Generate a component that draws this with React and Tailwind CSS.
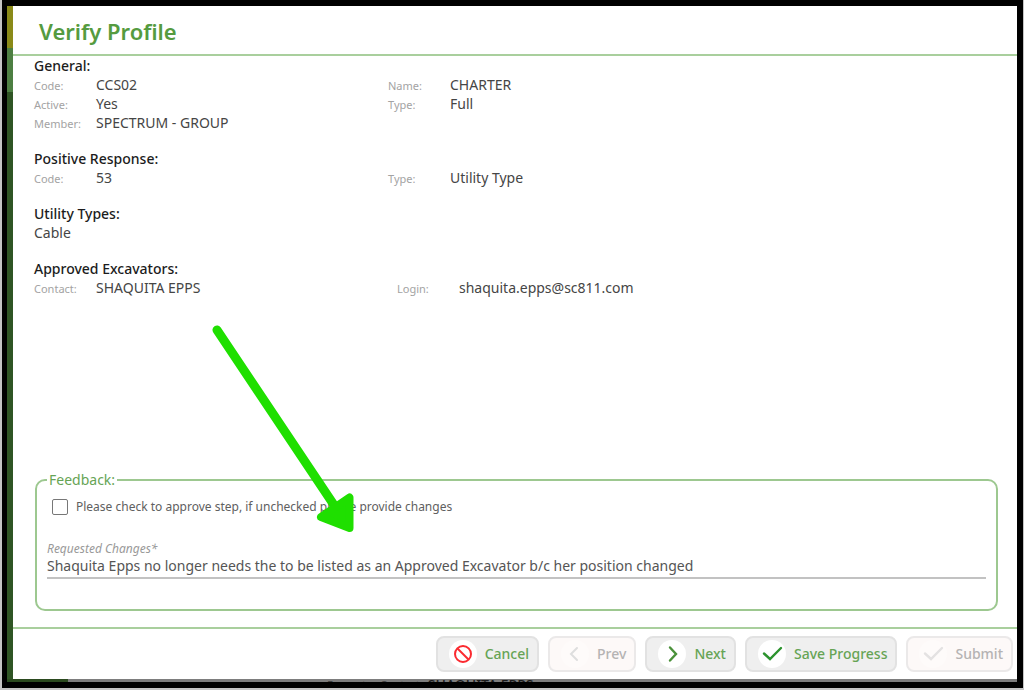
import React, { useState } from 'react';

const Field = ({ label, children }) => (
    <div className="flex h-[19px] items-baseline">
        <dt className="w-[62px] text-[11px] text-[#a3a3a3]">{label}</dt>
        <dd className="text-[#454545]">{children}</dd>
    </div>
);

const Section = ({ title, children }) => (
    <section>
        <h2 className="font-medium text-[#1c1c1c]">{title}</h2>
        {children}
    </section>
);

const CancelIcon = () => (
    <svg viewBox="0 0 28 28" className="size-7" fill="none" stroke="#fb2a30" strokeWidth="2">
        <circle cx="14" cy="14" r="8" />
        <path d="M8.5 8.5l11 11" />
    </svg>
);

const PrevIcon = () => (
    <svg viewBox="0 0 28 28" className="size-7" fill="none" stroke="#dedede" strokeWidth="2" strokeLinecap="round">
        <path d="M16 8l-6 6 6 6" />
    </svg>
);

const NextIcon = () => (
    <svg viewBox="0 0 28 28" className="size-7" fill="none" stroke="#4a9139" strokeWidth="2.4" strokeLinecap="round">
        <path d="M12 7.5l6 6.5-6 6.5" />
    </svg>
);

const CheckIcon = ({ color }) => (
    <svg viewBox="0 0 28 28" className="size-7" fill="none" stroke={color} strokeWidth="2.4" strokeLinecap="round">
        <path d="M6 13.5l6 5.5L23 8" />
    </svg>
);

const ActionButton = ({ icon, disabled, children }) => (
    <button
        type="button"
        disabled={disabled}
        className={`flex h-9 items-center gap-2 rounded-lg border-2 pl-[11px] pr-2 text-sm font-medium ${
            disabled ? 'border-[#ebe9e9] bg-[#fdf9f8] text-[#b5b3b3]' : 'border-[#e2e2e2] bg-[#efefef] text-[#66a455]'
        }`}
    >
        <span className={`rounded-full ${disabled ? 'bg-[#fefbfa]' : 'bg-white'}`}>{icon}</span>
        {children}
    </button>
);

const App = () => {
    const [approved, setApproved] = useState(false);
    const [changes, setChanges] = useState(
        'Shaquita Epps no longer needs the to be listed as an Approved Excavator b/c her position changed'
    );

    return (
        <div className="flex min-h-screen bg-[#c4c4c4] pb-0.5 pl-0.5 pr-px font-['Noto_Sans','Open_Sans',sans-serif] text-sm leading-[19px]">
            <div className="relative flex grow flex-col border-y-[6px] border-l-[5px] border-r-[6px] border-black bg-white">
                <div className="flex grow">
                    {/* Edge of the page behind the dialog */}
                    <div className="flex w-1.5 shrink-0 flex-col overflow-hidden bg-[#2f5524]">
                        <div className="h-[42px] bg-[#8a8a18]" />
                        <div className="h-11 bg-[#4d7f42]" />
                    </div>

                    <main className="flex min-w-0 grow flex-col">
                        <header className="border-b-2 border-[#a9cf9d] px-[26px] pb-[9px] pt-3">
                            <h1 className="text-[22px] font-semibold leading-[27px] text-[#559b40]">Verify Profile</h1>
                        </header>

                        <div className="flex flex-col gap-[17px] px-[21px]">
                            <Section title="General:">
                                <dl className="grid grid-cols-[354px_1fr]">
                                    <Field label="Code:">CCS02</Field>
                                    <Field label="Name:">CHARTER</Field>
                                    <Field label="Active:">Yes</Field>
                                    <Field label="Type:">Full</Field>
                                    <Field label="Member:">SPECTRUM - GROUP</Field>
                                </dl>
                            </Section>
                            <Section title="Positive Response:">
                                <dl className="grid grid-cols-[354px_1fr]">
                                    <Field label="Code:">53</Field>
                                    <Field label="Type:">Utility Type</Field>
                                </dl>
                            </Section>
                            <Section title="Utility Types:">
                                <p className="text-[#454545]">Cable</p>
                            </Section>
                            <Section title="Approved Excavators:">
                                <dl className="grid grid-cols-[363px_1fr]">
                                    <Field label="Contact:">SHAQUITA EPPS</Field>
                                    <Field label="Login:">shaquita.epps@sc811.com</Field>
                                </dl>
                            </Section>
                        </div>

                        <fieldset className="mb-4 ml-[22px] mr-[19px] mt-auto rounded-[10px] border-2 border-[#9dc890] px-2.5 pb-[30px]">
                            <legend className="px-0.5 text-[#66a455]">Feedback:</legend>
                            <label className="flex items-center gap-2 pl-[5px] pt-2 text-xs leading-[19px] text-[#606060]">
                                <input
                                    type="checkbox"
                                    checked={approved}
                                    onChange={(e) => setApproved(e.target.checked)}
                                    className="size-4 appearance-none rounded-xs border border-[#777] bg-white checked:bg-[#66a455]"
                                />
                                Please check to approve step, if unchecked please provide changes
                            </label>
                            <label htmlFor="changes" className="mt-[26px] block text-xs leading-[14px] italic text-[#999]">
                                Requested Changes*
                            </label>
                            <input
                                id="changes"
                                type="text"
                                value={changes}
                                onChange={(e) => setChanges(e.target.value)}
                                className="block w-full border-b-2 border-[#c2c2c2] pb-0.5 text-sm leading-[19px] text-[#555] outline-none"
                            />
                        </fieldset>

                        <footer className="flex justify-end gap-[9px] border-t-2 border-[#a9cf9d] py-[7px] pl-2 pr-1">
                            <ActionButton icon={<CancelIcon />}>Cancel</ActionButton>
                            <ActionButton icon={<PrevIcon />} disabled>Prev</ActionButton>
                            <ActionButton icon={<NextIcon />}>Next</ActionButton>
                            <ActionButton icon={<CheckIcon color="#2c932e" />}>Save Progress</ActionButton>
                            <ActionButton icon={<CheckIcon color="#e4e2e2" />} disabled>Submit</ActionButton>
                        </footer>
                    </main>
                </div>

                {/* Sliver of the page below the dialog */}
                <div className="flex h-[3px] overflow-hidden bg-[#7d7d7d]">
                    <div className="w-[61px] shrink-0 bg-[#2b4a1f]" />
                    <div className="-mt-1 ml-[259px] flex gap-2 whitespace-nowrap leading-[19px]">
                        <span className="text-[11px] text-[#444]">Excavator Contact</span>
                        <span className="font-medium text-[#1c1c1c]">SHAQUITA EPPS</span>
                    </div>
                </div>

                {/* Arrow pointing at the requested changes */}
                <svg
                    className="pointer-events-none absolute left-[193px] top-[304px] h-[230px] w-[180px]"
                    viewBox="0 0 180 230"
                    fill="#1fdf00"
                    stroke="#1fdf00"
                    strokeLinecap="round"
                    strokeLinejoin="round"
                >
                    <path d="M17 20L138 201" strokeWidth="9" />
                    <path d="M149.5 187.5V218L121 207z" strokeWidth="8" />
                </svg>
            </div>
        </div>
    );
};

export default App;
